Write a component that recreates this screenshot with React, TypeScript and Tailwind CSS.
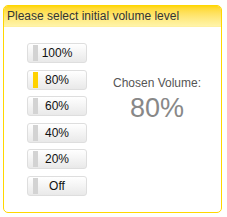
const levels = ['100%', '80%', '60%', '40%', '20%', 'Off'];

export default function App() {
  const selected = '80%';
  return (
    <div className="min-h-screen bg-white pt-[5px] pl-[3px] font-['Liberation_Sans',Arial,sans-serif]">
      <div className="w-[219px] h-[208px] border border-[#ffd700] rounded-[5px] overflow-hidden flex flex-col">
        <div className="h-[21px] shrink-0 bg-gradient-to-b from-[#ffd700] to-[#fff4a8] border-b border-[#fff0a0] pl-[3px] text-[12px] leading-[21px] text-[#333]">
          Please select initial volume level
        </div>
        <div className="flex pt-[16px] pl-[23px]">
          <div className="flex flex-col gap-[6.6px]">
            {levels.map((l) => (
              <button
                key={l}
                className="relative w-[60px] h-[20px] rounded-[3px] border border-[#dedede] bg-gradient-to-b from-white to-[#e9e9e9] text-[12px] text-[#111] flex items-center justify-center"
              >
                <span
                  className={`absolute left-[5px] top-[1px] bottom-[1px] w-[5px] ${
                    l === selected ? 'bg-[#ffd200]' : 'bg-[#d3d3d3]'
                  }`}
                />
                {l}
              </button>
            ))}
          </div>
          <div className="flex-1 flex flex-col items-center pt-[32px] pl-[6px]">
            <div className="text-[12px] leading-[16px] text-[#555]">Chosen Volume:</div>
            <div className="text-[27px] leading-[30px] text-[#888] mt-[2px]">{selected}</div>
          </div>
        </div>
      </div>
    </div>
  );
}
